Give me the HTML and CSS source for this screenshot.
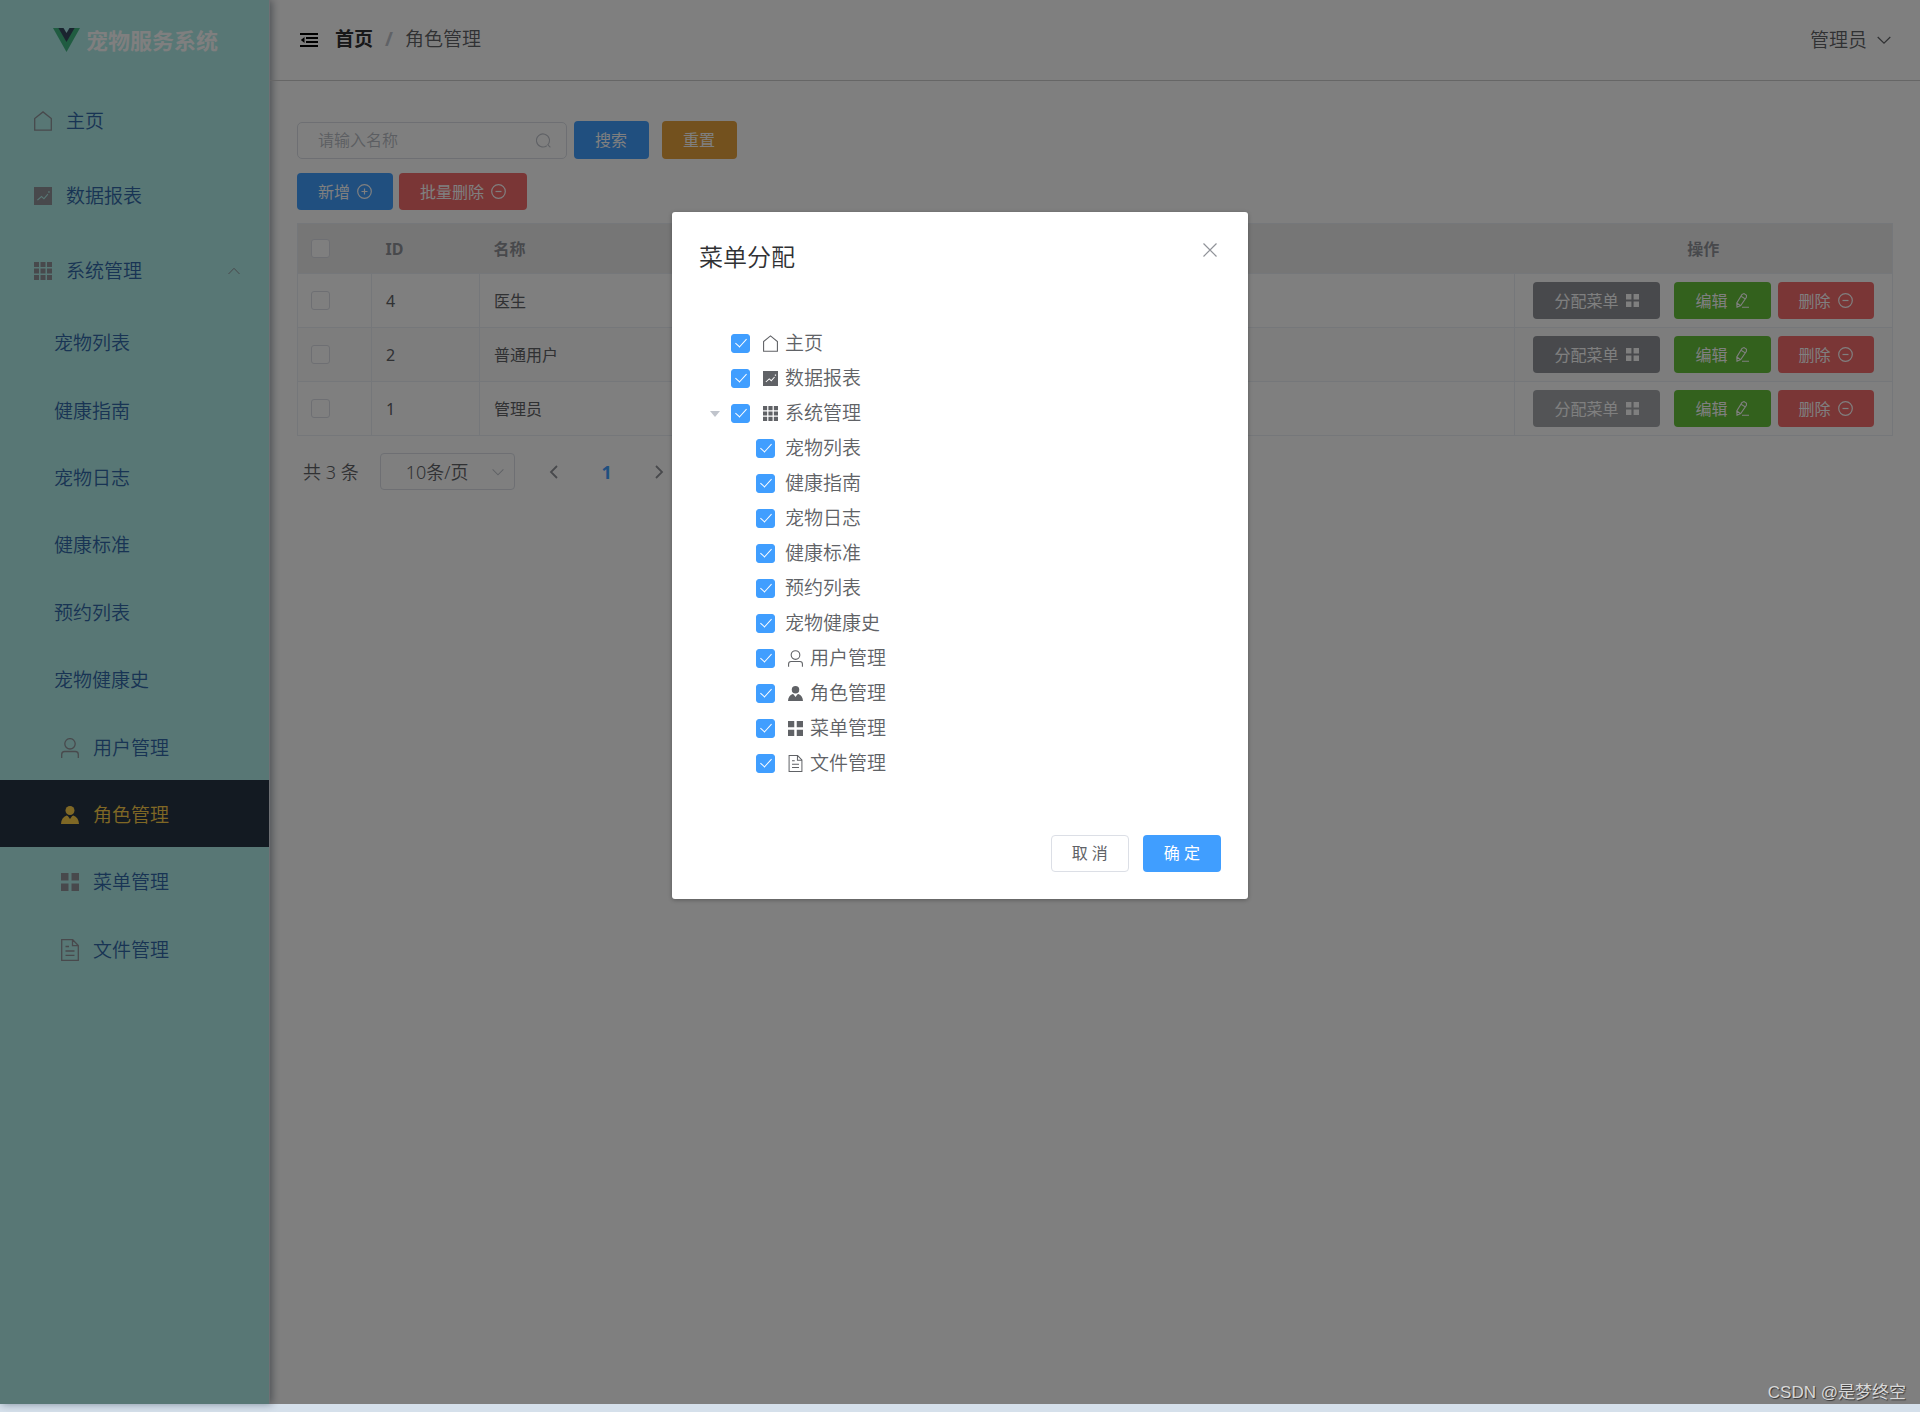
FILE: index.html
```html
<!DOCTYPE html>
<html lang="zh-CN">
<head>
<meta charset="utf-8">
<title>宠物服务系统</title>
<link rel="stylesheet" href="styles.css">
</head>
<body>
<svg class="sprite" aria-hidden="true">
  <symbol id="i-home" viewBox="0 0 18 20"><path d="M.7 19.2V7.6L9 .9l8.300 6.700v11.600z" fill="none" stroke="currentColor" stroke-width="1.300"/></symbol>
  <symbol id="i-chart" viewBox="0 0 18 18"><path fill="currentColor" fill-rule="evenodd" d="M0 0h18v18H0zM3 12.800l.8.8 3.700-3.400 2.500 2.300 4.300-5-.8-.7-3.600 4.100-2.400-2.200zM14.200 4.200v1.500h1.500V4.200z"/></symbol>
  <symbol id="i-grid" viewBox="0 0 18 18"><path fill="currentColor" d="M0 0h5v5H0zM6.500 0h5v5h-5zM13 0h5v5h-5zM0 6.500h5v5H0zM6.500 6.500h5v5h-5zM13 6.500h5v5h-5zM0 13h5v5H0zM6.500 13h5v5h-5zM13 13h5v5h-5z"/></symbol>
  <symbol id="i-user" viewBox="0 0 18 20"><g fill="none" stroke="currentColor" stroke-width="1.300"><circle cx="9" cy="5.800" r="5.200"/><path d="M.7 20v-3.500q0-3 3-3h10.600q3 0 3 3V20"/></g></symbol>
  <symbol id="i-user-solid" viewBox="0 0 20 20"><circle cx="10" cy="5" r="5" fill="currentColor"/><path fill="currentColor" d="M0 20c.2-5 2.500-8.300 6.200-9.500l1.400.7L10 14.500l2.400-3.300 1.400-.7C17.500 11.700 19.800 15 20 20z"/></symbol>
  <symbol id="i-menu" viewBox="0 0 18 18"><path fill="currentColor" d="M0 0h7.500v7.500H0zM10.500 0H18v7.500h-7.500zM0 10.500h7.500V18H0zM10.500 10.500H18V18h-7.500z"/></symbol>
  <symbol id="i-doc" viewBox="0 0 18 22"><path d="M.7.7h11l5.600 5.800v14.800H.7zM11.500.7v6h5.800M4.500 7.500H8M4.500 12h9M4.500 16.300h9" fill="none" stroke="currentColor" stroke-width="1.300"/></symbol>
  <symbol id="i-up" viewBox="0 0 12 12"><path d="M.5 9 6 3.300 11.500 9" fill="none" stroke="currentColor"/></symbol>
  <symbol id="i-down" viewBox="0 0 14 14"><path d="M.7 4 7 10.200 13.300 4" fill="none" stroke="currentColor" stroke-width="1.200"/></symbol>
  <symbol id="i-left" viewBox="0 0 14 14"><path d="M10 1 4 7l6 6" fill="none" stroke="currentColor" stroke-width="1.800"/></symbol>
  <symbol id="i-right" viewBox="0 0 14 14"><path d="m4 1 6 6-6 6" fill="none" stroke="currentColor" stroke-width="1.800"/></symbol>
  <symbol id="i-fold" viewBox="0 0 18 14"><path d="M0 0h18v2H0zM6 4h12v2H6zM6 8h12v2H6zM0 12h18v2H0zM4.500 4v6L.8 7z" fill="currentColor"/></symbol>
  <symbol id="i-search" viewBox="0 0 15 15"><path d="M11.800 11.800a6.500 6.500 0 1 0-1 .9M11.400 11.400l3 3" fill="none" stroke="currentColor" stroke-width="1.100"/></symbol>
  <symbol id="i-plus" viewBox="0 0 15 15"><g fill="none" stroke="currentColor" stroke-width="1.200"><circle cx="7.500" cy="7.500" r="6.800"/><path d="M4.500 7.500h6M7.500 4.500v6"/></g></symbol>
  <symbol id="i-minus" viewBox="0 0 15 15"><g fill="none" stroke="currentColor" stroke-width="1.200"><circle cx="7.500" cy="7.500" r="6.800"/><path d="M4.500 7.500h6"/></g></symbol>
  <symbol id="i-edit" viewBox="0 0 15 15"><path d="M7 1.500 9 .6l2.500 1.600-.1 2-5.700 8.400L2 14.200l-.2-4.300zM6 3.200l4.300 2.700M1.800 10l3.500 2.400M7 14.300h7" fill="none" stroke="currentColor" stroke-width="1.100"/></symbol>
  <symbol id="i-close" viewBox="0 0 14 14"><path d="m.5.5 13 13M13.500.5l-13 13" fill="none" stroke="currentColor" stroke-width="1.200"/></symbol>
</svg>

<div class="app">
  <aside class="sidebar">
    <div class="logo">
      <svg class="logo-mark" viewBox="0 0 27 24" aria-hidden="true"><path fill="#41b883" d="M0 0h27L13.500 24z"/><path fill="#35495e" d="M5.400 0h16.200L13.500 14z"/><path fill="#afeeee" d="M10.500 0h6l-3 5z"/></svg>
      <span>宠物服务系统</span>
    </div>
    <nav>
      <ul class="menu">
        <li><a href="#"><svg class="icon tall"><use href="#i-home"/></svg>主页</a></li>
        <li><a href="#"><svg class="icon"><use href="#i-chart"/></svg>数据报表</a></li>
        <li><a href="#"><svg class="icon"><use href="#i-grid"/></svg>系统管理<svg class="menu-arrow"><use href="#i-up"/></svg></a></li>
      </ul>
      <ul class="submenu">
        <li><a href="#">宠物列表</a></li>
        <li><a href="#">健康指南</a></li>
        <li><a href="#">宠物日志</a></li>
        <li><a href="#">健康标准</a></li>
        <li><a href="#">预约列表</a></li>
        <li><a href="#">宠物健康史</a></li>
        <li><a class="with-icon" href="#"><svg class="icon tall"><use href="#i-user"/></svg>用户管理</a></li>
        <li><a class="with-icon active" href="#"><svg class="icon tall"><use href="#i-user-solid"/></svg>角色管理</a></li>
        <li><a class="with-icon" href="#"><svg class="icon"><use href="#i-menu"/></svg>菜单管理</a></li>
        <li><a class="with-icon" href="#"><svg class="icon doc"><use href="#i-doc"/></svg>文件管理</a></li>
      </ul>
    </nav>
  </aside>

  <div class="page">
    <header class="topbar">
      <button class="fold" type="button" aria-label="折叠菜单"><svg><use href="#i-fold"/></svg></button>
      <nav class="crumbs"><a href="#">首页</a><span class="slash">/</span><span>角色管理</span></nav>
      <button class="account" type="button">管理员<svg><use href="#i-down"/></svg></button>
    </header>

    <main class="content">
      <form class="filters">
        <label class="search"><input type="text" placeholder="请输入名称" aria-label="名称"><svg><use href="#i-search"/></svg></label>
        <button class="btn primary tall-btn" type="button">搜索</button>
        <button class="btn warning tall-btn" type="button">重置</button>
      </form>
      <div class="toolbar">
        <button class="btn primary" type="button">新增<svg><use href="#i-plus"/></svg></button>
        <button class="btn danger" type="button">批量删除<svg><use href="#i-minus"/></svg></button>
      </div>

      <table class="roles">
        <colgroup><col class="c-check"><col class="c-id"><col><col class="c-ops"></colgroup>
        <thead>
          <tr><th><input class="check" type="checkbox" aria-label="全选"></th><th>ID</th><th>名称</th><th class="ops-head">操作</th></tr>
        </thead>
        <tbody>
          <tr><td><input class="check" type="checkbox" aria-label="选择 4"></td><td>4</td><td>医生</td>
            <td><div class="ops"><button class="btn info" type="button">分配菜单<svg class="sq"><use href="#i-menu"/></svg></button><button class="btn success" type="button">编辑<svg><use href="#i-edit"/></svg></button><button class="btn danger" type="button">删除<svg><use href="#i-minus"/></svg></button></div></td></tr>
          <tr><td><input class="check" type="checkbox" aria-label="选择 2"></td><td>2</td><td>普通用户</td>
            <td><div class="ops"><button class="btn info" type="button">分配菜单<svg class="sq"><use href="#i-menu"/></svg></button><button class="btn success" type="button">编辑<svg><use href="#i-edit"/></svg></button><button class="btn danger" type="button">删除<svg><use href="#i-minus"/></svg></button></div></td></tr>
          <tr><td><input class="check" type="checkbox" aria-label="选择 1"></td><td>1</td><td>管理员</td>
            <td><div class="ops"><button class="btn info" type="button" disabled>分配菜单<svg class="sq"><use href="#i-menu"/></svg></button><button class="btn success" type="button">编辑<svg><use href="#i-edit"/></svg></button><button class="btn danger" type="button">删除<svg><use href="#i-minus"/></svg></button></div></td></tr>
        </tbody>
      </table>

      <div class="pager">
        <span>共 3 条</span>
        <div class="page-size"><select aria-label="每页条数"><option>10条/页</option></select><svg><use href="#i-down"/></svg></div>
        <button type="button" aria-label="上一页"><svg><use href="#i-left"/></svg></button>
        <button class="current" type="button">1</button>
        <button type="button" aria-label="下一页"><svg><use href="#i-right"/></svg></button>
      </div>
    </main>
  </div>

  <div class="overlay">
    <section class="dialog" role="dialog" aria-modal="true" aria-labelledby="dialog-title">
      <header class="dialog-head">
        <h2 id="dialog-title">菜单分配</h2>
        <button class="close" type="button" aria-label="关闭"><svg><use href="#i-close"/></svg></button>
      </header>
      <ul class="tree">
        <li><label><input class="check" type="checkbox" checked><svg class="icon tall"><use href="#i-home"/></svg>主页</label></li>
        <li><label><input class="check" type="checkbox" checked><svg class="icon"><use href="#i-chart"/></svg>数据报表</label></li>
        <li class="open"><label><input class="check" type="checkbox" checked><svg class="icon"><use href="#i-grid"/></svg>系统管理</label>
          <ul>
            <li><label><input class="check" type="checkbox" checked>宠物列表</label></li>
            <li><label><input class="check" type="checkbox" checked>健康指南</label></li>
            <li><label><input class="check" type="checkbox" checked>宠物日志</label></li>
            <li><label><input class="check" type="checkbox" checked>健康标准</label></li>
            <li><label><input class="check" type="checkbox" checked>预约列表</label></li>
            <li><label><input class="check" type="checkbox" checked>宠物健康史</label></li>
            <li><label><input class="check" type="checkbox" checked><svg class="icon tall"><use href="#i-user"/></svg>用户管理</label></li>
            <li><label><input class="check" type="checkbox" checked><svg class="icon tall"><use href="#i-user-solid"/></svg>角色管理</label></li>
            <li><label><input class="check" type="checkbox" checked><svg class="icon"><use href="#i-menu"/></svg>菜单管理</label></li>
            <li><label><input class="check" type="checkbox" checked><svg class="icon tall"><use href="#i-doc"/></svg>文件管理</label></li>
          </ul>
        </li>
      </ul>
      <footer class="dialog-foot">
        <button class="btn plain" type="button">取 消</button>
        <button class="btn primary" type="button">确 定</button>
      </footer>
    </section>
  </div>
  <div class="watermark">CSDN @是梦终空</div>
</div>
</body>
</html>
```
FILE: styles.css
```css
* { box-sizing: border-box; }

body {
  margin: 0;
  background: #d5e0eb;
  color: #606266;
  font: 350 19px/28px "Noto Sans", "Noto Sans CJK SC", sans-serif;
}

button, input, select { font: inherit; color: inherit; margin: 0; }
button { cursor: pointer; }
ul { list-style: none; margin: 0; padding: 0; }
a { color: inherit; text-decoration: none; }
svg { display: block; flex: none; }
.sprite { position: absolute; width: 0; height: 0; }

.app {
  position: relative;
  display: flex;
  min-height: calc(100vh - 8px);
  margin-bottom: 8px;
  background: #fff;
}

/* sidebar */
.sidebar {
  flex: none;
  width: 270px;
  background: #b0eeea;
  border-right: 1px solid #dcdfe6;
  box-shadow: 2px 0 8px rgba(0, 21, 41, .4);
}

.logo {
  display: flex;
  align-items: center;
  gap: 6px;
  height: 80px;
  padding-left: 53px;
  color: #fff;
  font-size: 22px;
  font-weight: 700;
}
.logo-mark { width: 27px; height: 24px; }

.menu { padding-top: 3px; }
.menu a, .submenu a {
  display: flex;
  align-items: center;
  gap: 14px;
  color: #3068a8;
}
.menu a { height: 75px; padding: 0 29px 0 34px; }
.submenu {
  display: grid;
  grid-auto-rows: 1fr;
  min-height: 674px;
}
.submenu a { height: 100%; padding: 3px 0 0 54px; }
.submenu .with-icon { padding-left: 61px; }
.submenu .active { background: #263445; color: #ffd04b; }

.icon { width: 18px; height: 18px; color: #909399; }
.icon.tall { height: 20px; }
.icon.doc { height: 22px; }
.active .icon { color: inherit; }
.menu-arrow { width: 12px; height: 12px; margin-left: auto; color: #909399; }

/* top bar */
.page { flex: 1; min-width: 0; }
.topbar {
  display: flex;
  align-items: center;
  height: 81px;
  padding: 0 29px 0 30px;
  border-bottom: 1px solid #ccc;
}
.topbar button { border: 0; padding: 0; background: none; }
.topbar .fold { color: #000; }
.fold svg { width: 18px; height: 14px; }
.crumbs { display: flex; gap: 12px; margin-left: 17px; padding-bottom: 2px; }
.crumbs a { color: #303133; font-weight: 700; }
.slash { color: #c0c4cc; font-weight: 700; }
.account { display: flex; align-items: center; gap: 10px; margin-left: auto; }
.account svg { width: 14px; height: 14px; }

/* content */
.content { padding: 40px 27px 0; font-size: 16px; }
.filters { display: flex; align-items: center; }
.search {
  display: flex;
  align-items: center;
  width: 270px;
  height: 37px;
  margin-right: 7px;
  padding: 0 15px 0 20px;
  border: 1px solid #dcdfe6;
  border-radius: 5px;
}
.search input { flex: 1; min-width: 0; border: 0; padding: 0; outline: 0; background: none; }
.search input::placeholder { color: #b8bcc4; opacity: 1; }
.search svg { width: 15px; height: 15px; color: #c0c4cc; }

.btn {
  display: flex;
  align-items: center;
  gap: 7px;
  height: 37px;
  padding: 0 20px;
  border: 1px solid transparent;
  border-radius: 4px;
  color: #fff;
  font-size: 16px;
  font-weight: 400;
  line-height: 24px;
  white-space: nowrap;
}
.btn svg { width: 15px; height: 15px; }
.btn svg.sq { width: 13px; height: 13px; margin-left: 1px; }
.tall-btn { height: 38px; width: 75px; }
.primary { background: #409eff; }
.warning { background: #e6a23c; margin-left: 13px; }
.danger { background: #f56c6c; }
.success { background: #67c23a; }
.info { background: #909399; }
.info:disabled { background: #a6a9ad; color: #fff; }
.plain { background: #fff; border-color: #dcdfe6; color: #606266; }

.toolbar { display: flex; gap: 6px; padding: 14px 0 13px; }

.check {
  appearance: none;
  display: grid;
  place-items: center;
  flex: none;
  width: 19px;
  height: 19px;
  border: 1px solid #dcdfe6;
  border-radius: 3px;
  background: #fff;
}
.check:checked { background: #409eff; border-color: #409eff; }
.check:checked::after {
  content: "";
  width: 5px;
  height: 10px;
  margin-bottom: 3px;
  border: solid #fff;
  border-width: 0 1px 1px 0;
  transform: rotate(42deg);
}

.roles {
  width: 100%;
  table-layout: fixed;
  border-collapse: collapse;
  border: 1px solid #ebeef5;
}
.c-check { width: 74px; }
.c-id { width: 108px; }
.c-ops { width: 378px; }
.roles th, .roles td { padding: 0 14px; text-align: left; border-bottom: 1px solid #ebeef5; }
.roles th { height: 50px; background: #ededed; color: #909399; font-weight: 700; }
.roles td { height: 54px; border-right: 1px solid #ebeef5; font-weight: 400; }
.roles th:first-child, .roles td:first-child { padding-left: 13px; }
.roles tbody tr:nth-child(2) { background: #fafafa; }
.roles .ops-head { text-align: center; }
.ops { display: flex; justify-content: center; gap: 7px; }
.ops .info { margin-right: 7px; }

.pager { display: flex; align-items: center; padding: 17px 6px; font-size: 18px; }
.page-size { display: grid; align-items: center; width: 135px; margin: 0 32px 0 21px; }
.page-size > * { grid-area: 1 / 1; }
.page-size select {
  appearance: none;
  width: 100%;
  height: 37px;
  padding: 0 25px;
  border: 1px solid #dcdfe6;
  border-radius: 4px;
  background: none;
}
.page-size svg { width: 12px; height: 12px; justify-self: end; margin-right: 11px; color: #c0c4cc; }
.pager button { display: grid; place-items: center; width: 14px; height: 37px; padding: 0; border: 0; background: none; color: #909399; }
.pager button svg { width: 14px; height: 14px; }
.pager .current { width: 48px; margin: 0 21px 0 22px; color: #409eff; font-weight: 700; }

/* dialog */
.overlay {
  position: absolute;
  inset: 0;
  display: flex;
  align-items: flex-start;
  justify-content: center;
  padding-top: 15vh;
  background: rgba(0, 0, 0, .5);
}
.dialog {
  width: 30%;
  padding: 27px;
  border-radius: 3px;
  background: #fff;
  box-shadow: 0 1px 4px rgba(0, 0, 0, .3);
}
.dialog-head { display: flex; align-items: flex-start; justify-content: space-between; }
.dialog-head h2 { margin: 0; color: #303133; font-size: 24px; font-weight: 350; line-height: 36px; }
.close { display: grid; place-items: center; width: 22px; height: 22px; padding: 0; border: 0; background: none; color: #909399; }
.close svg { width: 14px; height: 14px; }
.tree { padding: 51px 0 54px 32px; }
.tree label { display: flex; align-items: center; height: 35px; }
.tree .check { margin-right: 10px; }
.tree .icon { width: 15px; height: 15px; margin: 0 7px 0 3px; color: #606266; }
.tree .icon.tall { height: 17px; }
.tree ul { padding-left: 25px; }
.open { position: relative; }
.open::before {
  content: "";
  position: absolute;
  left: -21px;
  top: 15px;
  border: 5px solid transparent;
  border-top: 6px solid #c0c4cc;
  border-bottom: 0;
}
.dialog-foot { display: flex; justify-content: flex-end; gap: 14px; }

.watermark {
  position: absolute;
  right: 14px;
  bottom: 0;
  color: #d8d8d8;
  font: 17px/22px "Liberation Sans", "Noto Sans CJK SC", sans-serif;
  text-shadow: 1px 1px 1px rgba(0, 0, 0, .6);
}
```
